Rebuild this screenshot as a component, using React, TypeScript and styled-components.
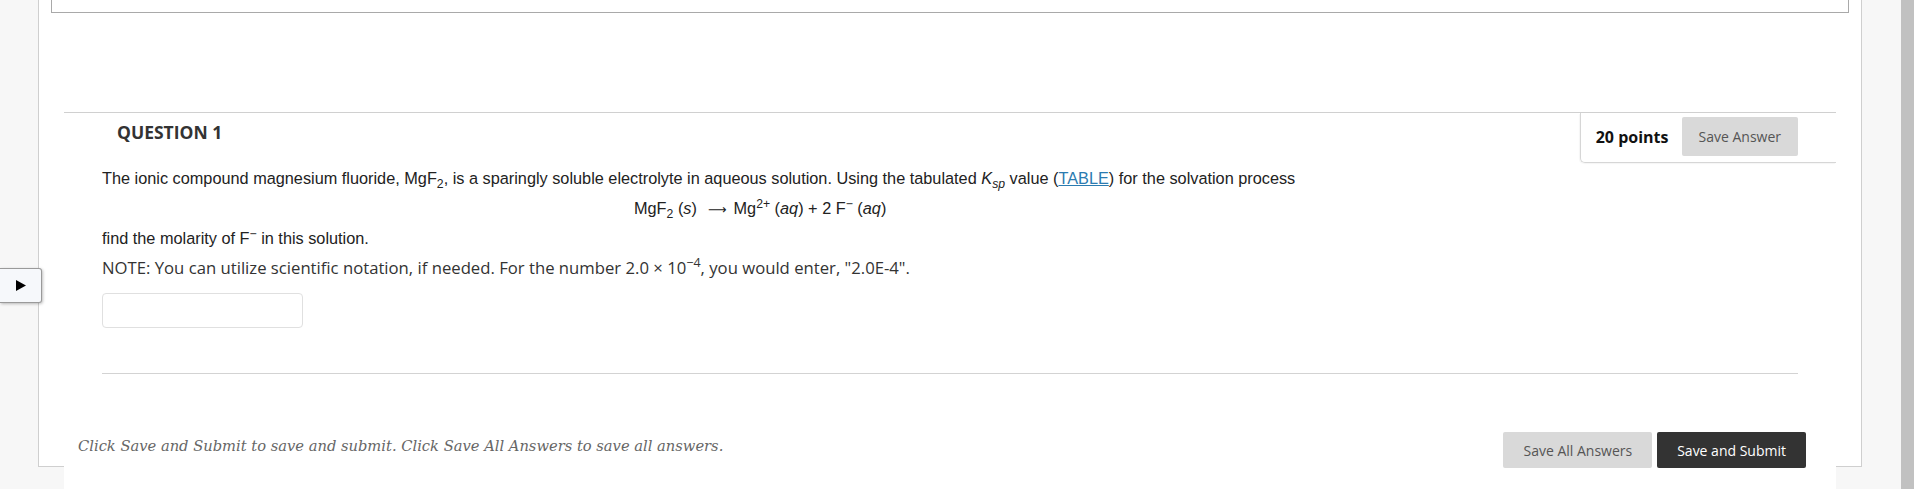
import styled, { createGlobalStyle } from "styled-components";

const GlobalStyle = createGlobalStyle`
  html, body {
    margin: 0;
    padding: 0;
    background: #f7f7f7;
  }
  body {
    font-family: "Liberation Sans", Arial, sans-serif;
    overflow: hidden;
  }
`;

const Shell = styled.div`
  position: relative;
  display: flex;
  height: 489px;
  overflow: hidden;
`;

const Container = styled.div`
  box-sizing: border-box;
  margin-left: 38px;
  width: 1824px;
  height: 467px;
  background: #fff;
  border: 1px solid #cfcfcf;
  border-top: none;
`;

const Gutter = styled.div`
  flex: 1;
`;

const Scrollbar = styled.div`
  width: 13px;
  background: #c1c1c1;
`;

const TopBox = styled.div`
  height: 40px;
  margin: -27px 12px 0;
  border: 1px solid #a9a9a9;
  box-sizing: border-box;
`;

const Question = styled.section`
  margin: 99px 25px 0;
`;

const HeaderRow = styled.div`
  display: flex;
  justify-content: space-between;
  align-items: flex-start;
  border-top: 1px solid #d0d0d0;
`;

const Heading = styled.h2`
  margin: 0;
  padding: 7px 0 0 53px;
  font-family: "Open Sans", sans-serif;
  font-size: 17.5px;
  font-weight: 700;
  line-height: 24px;
  color: #333;
`;

const PointsBox = styled.div`
  display: flex;
  align-items: center;
  gap: 13px;
  padding: 4px 38px 6px 15px;
  border-left: 1px solid #d6d6d6;
  border-bottom: 1px solid #d6d6d6;
  border-bottom-left-radius: 5px;
  box-shadow: -1px 1px 1px rgba(0, 0, 0, 0.04);
`;

const Points = styled.span`
  font-family: "Open Sans", sans-serif;
  font-size: 16px;
  font-weight: 700;
  color: #111;
`;

const Button = styled.button<{ $dark?: boolean; $compact?: boolean }>`
  height: ${(p) => (p.$compact ? 39 : 36)}px;
  padding: 0 ${(p) => (p.$compact ? 17 : 20)}px;
  border: none;
  border-radius: 2px;
  font-family: "Open Sans", sans-serif;
  font-size: 14px;
  background: ${(p) => (p.$dark ? "#333" : "#d9d9d9")};
  color: ${(p) => (p.$dark ? "#fff" : "#555")};
  cursor: pointer;
`;

const Body = styled.div`
  padding: 0 38px;
  font-size: 16.3px;
  line-height: 30px;
  color: #222;
`;

const Para = styled.p`
  margin: 0;
`;

const Equation = styled.p`
  margin: 0 0 0 532px;
`;

const Arrow = styled.span`
  font-family: "DejaVu Sans", sans-serif;
  font-size: 13px;
  line-height: 0;
  margin: 0 7px 0 11px;
`;

const Note = styled.p`
  margin: 0;
  font-family: "Open Sans", sans-serif;
  font-size: 16.7px;
  line-height: 29px;
  color: #333;
`;

const Sub = styled.sub`
  font-size: 75%;
  line-height: 0;
`;

const Sup = styled.sup`
  font-size: 75%;
  line-height: 0;
`;

const Link = styled.a`
  color: #2b7bb0;
  text-decoration: underline;
`;

const AnswerInput = styled.input`
  display: block;
  box-sizing: border-box;
  width: 201px;
  height: 35px;
  margin-top: 11px;
  border: 1px solid #e0e0e0;
  border-radius: 4px;
  outline: none;
`;

const Divider = styled.hr`
  margin: 45px 0 0;
  border: none;
  border-top: 1px solid #d3d3d3;
`;

const Footer = styled.div`
  position: absolute;
  left: 64px;
  right: 78px;
  bottom: 0;
  height: 78px;
  box-sizing: border-box;
  padding: 21px 30px 0 14px;
  display: flex;
  justify-content: space-between;
  align-items: flex-start;
  background: #fff;
`;

const FooterText = styled.p`
  margin: 5px 0 0;
  font-family: "DejaVu Serif", Georgia, serif;
  font-style: italic;
  font-size: 14.7px;
  color: #666;
`;

const FooterActions = styled.div`
  display: flex;
  gap: 5px;
`;

const SideTab = styled.button`
  position: absolute;
  left: 0;
  top: 268px;
  width: 42px;
  height: 35px;
  padding: 0;
  display: flex;
  align-items: center;
  justify-content: center;
  background: #f6f8fb;
  border: 1px solid #9a9a9a;
  border-left: none;
  border-radius: 0 3px 3px 0;
  box-shadow: 1px 1px 3px rgba(0, 0, 0, 0.25);
  cursor: pointer;
`;

export default function App() {
  return (
    <>
      <GlobalStyle />
      <Shell>
        <Container>
          <TopBox />
          <Question>
            <HeaderRow>
              <Heading>QUESTION 1</Heading>
              <PointsBox>
                <Points>20 points</Points>
                <Button $compact>Save Answer</Button>
              </PointsBox>
            </HeaderRow>
            <Body>
              <Para>
                The ionic compound magnesium fluoride, MgF<Sub>2</Sub>, is a sparingly soluble
                electrolyte in aqueous solution. Using the tabulated{" "}
                <i>
                  K<Sub>sp</Sub>
                </i>{" "}
                value (<Link href="#">TABLE</Link>) for the solvation process
              </Para>
              <Equation>
                MgF<Sub>2</Sub> (<i>s</i>)<Arrow>⟶</Arrow>Mg<Sup>2+</Sup> (<i>aq</i>) + 2 F
                <Sup>−</Sup> (<i>aq</i>)
              </Equation>
              <Para>
                find the molarity of F<Sup>−</Sup> in this solution.
              </Para>
              <Note>
                NOTE: You can utilize scientific notation, if needed. For the number 2.0 × 10
                <Sup>−4</Sup>, you would enter, "2.0E-4".
              </Note>
              <AnswerInput type="text" />
              <Divider />
            </Body>
          </Question>
        </Container>
        <Gutter />
        <Scrollbar />
        <SideTab aria-label="Open">
          <svg width="10" height="11" viewBox="0 0 10 11">
            <polygon points="0,0 10,5.5 0,11" fill="#000" />
          </svg>
        </SideTab>
        <Footer>
          <FooterText>
            Click Save and Submit to save and submit. Click Save All Answers to save all answers.
          </FooterText>
          <FooterActions>
            <Button>Save All Answers</Button>
            <Button $dark>Save and Submit</Button>
          </FooterActions>
        </Footer>
      </Shell>
    </>
  );
}
